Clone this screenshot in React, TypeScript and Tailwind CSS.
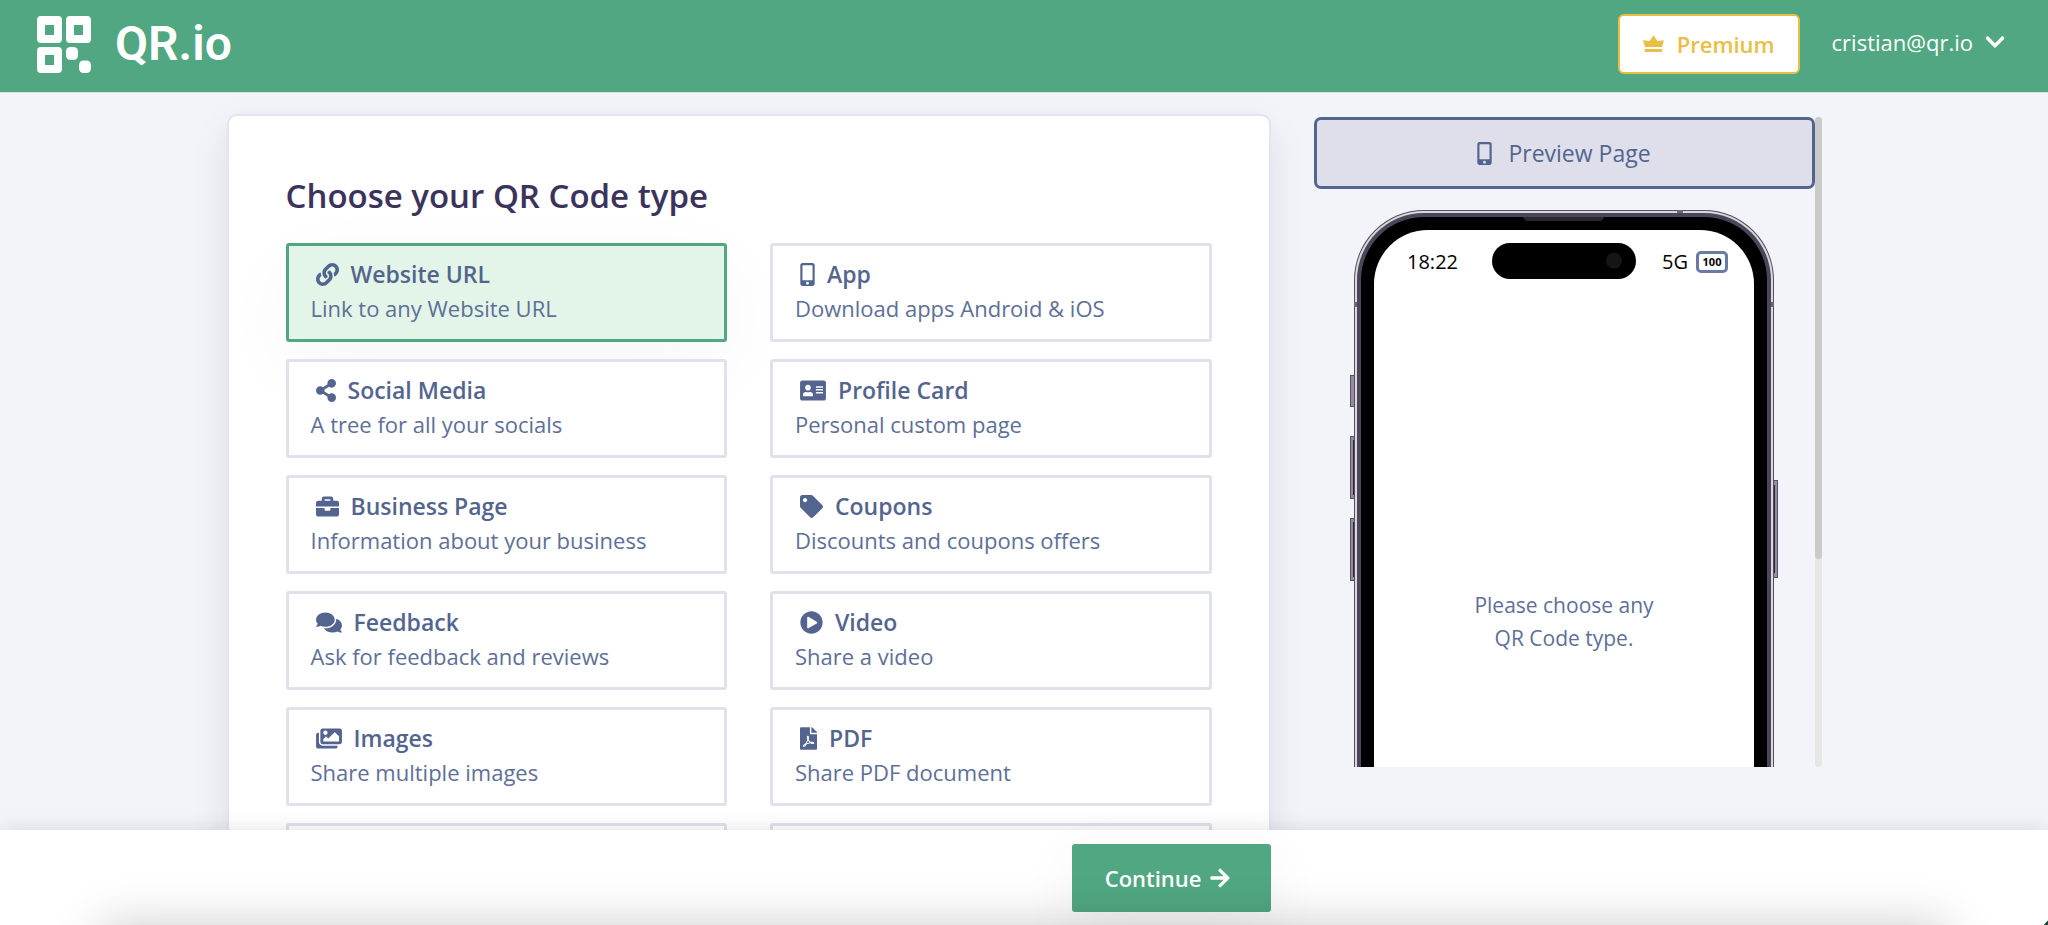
import React, { useState } from "react";
import type { IconType } from "react-icons";
import {
  FaLink, FaShareAlt, FaBriefcase, FaComments, FaImages, FaMobileAlt,
  FaAddressCard, FaTag, FaPlayCircle, FaFilePdf, FaArrowRight, FaChevronDown,
} from "react-icons/fa";

type QrType = { title: string; text: string; Icon: IconType; iconWidth: string };

const types: QrType[] = [
  { title: "Website URL", text: "Link to any Website URL", Icon: FaLink, iconWidth: "w-[23px]" },
  { title: "App", text: "Download apps Android & iOS", Icon: FaMobileAlt, iconWidth: "w-[15px]" },
  { title: "Social Media", text: "A tree for all your socials", Icon: FaShareAlt, iconWidth: "w-5" },
  { title: "Profile Card", text: "Personal custom page", Icon: FaAddressCard, iconWidth: "w-[26px]" },
  { title: "Business Page", text: "Information about your business", Icon: FaBriefcase, iconWidth: "w-[23px]" },
  { title: "Coupons", text: "Discounts and coupons offers", Icon: FaTag, iconWidth: "w-[23px]" },
  { title: "Feedback", text: "Ask for feedback and reviews", Icon: FaComments, iconWidth: "w-[26px]" },
  { title: "Video", text: "Share a video", Icon: FaPlayCircle, iconWidth: "w-[23px]" },
  { title: "Images", text: "Share multiple images", Icon: FaImages, iconWidth: "w-[26px]" },
  { title: "PDF", text: "Share PDF document", Icon: FaFilePdf, iconWidth: "w-[17px]" },
];

function LogoMark() {
  return (
    <svg className="h-[57px] w-[54px]" viewBox="0 0 54 57" fill="#fff" aria-hidden="true">
      <path fillRule="evenodd" d="M4 0h17a4 4 0 0 1 4 4v19a4 4 0 0 1-4 4H4a4 4 0 0 1-4-4V4a4 4 0 0 1 4-4zm4 9v10h9V9z" />
      <path fillRule="evenodd" d="M33 0h17a4 4 0 0 1 4 4v19a4 4 0 0 1-4 4H33a4 4 0 0 1-4-4V4a4 4 0 0 1 4-4zm4 9v10h9V9z" />
      <path fillRule="evenodd" d="M4 31h17a4 4 0 0 1 4 4v18a4 4 0 0 1-4 4H4a4 4 0 0 1-4-4V35a4 4 0 0 1 4-4zm4 8v10h9V39z" />
      <rect x="29" y="31" width="12" height="13" rx="4.5" />
      <rect x="42" y="44.5" width="12" height="12.5" rx="4.5" />
    </svg>
  );
}

function Crown() {
  return (
    <svg className="h-[18px] w-[21px]" viewBox="0 0 21 18" fill="currentColor" aria-hidden="true">
      <path d="M0 5.2 6.6 6 10.5.3 14.4 6l6.6-.8-2 6.8H2z" />
      <rect x="1.8" y="14" width="17.4" height="3" />
    </svg>
  );
}

function PhoneFrame() {
  return (
    <svg className="absolute inset-0 h-full w-full" viewBox="0 0 428 900" preserveAspectRatio="xMidYMin slice" aria-hidden="true">
      <g fill="#978aa0" stroke="#5a5163" strokeWidth="1">
        <rect x=".5" y="165.500" width="5" height="31" />
        <rect x=".5" y="226.500" width="5" height="62" />
        <rect x=".5" y="308.500" width="5" height="62" />
        <rect x="422.500" y="270.500" width="5" height="97" />
      </g>
      <g fill="#2c2435">
        <rect x="3" y="230" width="1.500" height="55" />
        <rect x="3" y="312" width="1.500" height="55" />
        <rect x="423.500" y="275" width="1.500" height="88" />
      </g>
      <rect x="4" y="0" width="420" height="890" rx="70" fill="#55505c" />
      <rect x="5" y="1" width="418" height="888" rx="69" fill="#d9d8dc" />
      <rect x="7" y="3" width="414" height="884" rx="67" fill="#4c465a" />
      <rect x="11" y="7" width="406" height="876" rx="63" fill="#000" />
      <path d="M173 7h81q-1 4-5 4h-71q-4 0-5-4z" fill="#2b282b" />
      <rect x="327" y="0" width="6" height="3" fill="#6f6479" />
      <rect x="4" y="92" width="3" height="5" fill="#6f6479" />
      <rect x="421" y="92" width="3" height="5" fill="#6f6479" />
      <rect x="24" y="20" width="380" height="850" rx="54" fill="#fff" />
      <rect x="142" y="33" width="144" height="36" rx="18" fill="#000" />
      <circle cx="264" cy="50.500" r="8" fill="#151515" />
    </svg>
  );
}

export default function App() {
  const [selected, setSelected] = useState("Website URL");

  return (
    <div className="relative flex h-screen flex-col overflow-hidden bg-[#f3f4f9] font-['Open_Sans',sans-serif] text-[#53658f]">
      <header className="flex items-center justify-between border-b border-[#d3e6e0] bg-[#50a781] pt-[14px] pr-[43px] pb-[18px] pl-[37px]">
        <a href="#" className="flex items-center gap-6 text-white">
          <LogoMark />
          <span className="font-['Roboto',sans-serif] text-[48px] leading-[56px] font-semibold">QR.io</span>
        </a>
        <div className="flex items-center gap-8">
          <button type="button" className="flex h-[60px] items-center gap-[13px] rounded-md border-2 border-[#e9be45] bg-white px-[23px] text-[22px] font-semibold text-[#e9be45]">
            <Crown />
            Premium
          </button>
          <button type="button" className="flex items-center gap-3 pb-1 text-[22px] text-white">
            cristian@qr.io
            <FaChevronDown className="h-[22px] w-5" />
          </button>
        </div>
      </header>

      <main className="min-h-0 flex-1 overflow-hidden px-6">
        <div className="mx-auto flex h-full max-w-[1595px] gap-[43px]">
          <section className="mt-[21px] h-fit flex-1 rounded-[10px] border-2 border-[#e2e4ef] bg-white px-[57px] pt-14 pb-14 shadow-[0_16px_36px_rgba(30,34,70,0.1)]">
            <h1 className="text-[33px] leading-[48px] font-semibold text-[#3b335b]">Choose your QR Code type</h1>
            <div className="mt-[23px] grid grid-cols-2 gap-x-[43px] gap-y-[17px]">
              {types.map(({ title, text, Icon, iconWidth }) => (
                <button
                  key={title}
                  type="button"
                  aria-pressed={selected === title}
                  onClick={() => setSelected(title)}
                  className={
                    selected === title
                      ? "h-[99px] rounded-[3px] border-3 border-[#50a781] bg-[#e3f5e9] px-[22px] pb-[3px] text-left shadow-[0_24px_80px_rgba(0,0,0,0.04)]"
                      : "h-[99px] rounded-[3px] border-3 border-[#dfe1ec] bg-white px-[22px] pb-[3px] text-left"
                  }
                >
                  <span className="flex items-center gap-3 pl-[5px] text-[23px] leading-[34px] font-semibold">
                    <Icon className={`h-[23px] ${iconWidth}`} />
                    {title}
                  </span>
                  <span className="block text-[22px] leading-[34px] text-[#5e6f98]">{text}</span>
                </button>
              ))}
              <div className="h-[99px] rounded-[3px] border-3 border-[#dfe1ec] bg-white" />
              <div className="h-[99px] rounded-[3px] border-3 border-[#dfe1ec] bg-white" />
            </div>
          </section>

          <aside className="mt-6 mb-[63px] flex w-[508px] overflow-hidden">
            <div className="flex min-w-0 flex-1 flex-col items-center">
              <button type="button" className="flex h-[72px] w-full shrink-0 items-center justify-center gap-4 rounded-[7px] border-3 border-[#53658f] bg-[#dedfeb] text-[23px]">
                <FaMobileAlt className="h-[23px] w-[15px]" />
                Preview Page
              </button>
              <div className="relative mt-[21px] h-[900px] w-[428px] shrink-0">
                <PhoneFrame />
                <div className="relative flex items-center justify-between pt-[34px] pr-[50px] pl-[57px] text-black">
                  <span className="text-[20px] leading-[36px]">18:22</span>
                  <span className="flex items-center gap-2 text-[20px] leading-[34px]">
                    5G
                    <span className="flex h-[22px] w-8 items-center justify-center rounded-[5px] border-3 border-[#6a7aa6] bg-white text-[11px] font-bold">100</span>
                  </span>
                </div>
                <p className="relative pt-[309px] text-center text-[21px] leading-[33px] text-[#5e6f98]">
                  Please choose any
                  <br />
                  QR Code type.
                </p>
              </div>
            </div>
            <div className="w-[7px] rounded-full bg-[#e6e6e6]">
              <div className="h-[68%] rounded-full bg-[#cacaca]" />
            </div>
          </aside>
        </div>
      </main>

      <footer className="relative bg-white px-6 pt-[14px] pb-[13px] shadow-[0_0_20px_rgba(0,0,0,0.12)]">
        <div className="mx-auto flex max-w-[1595px] gap-[43px]">
          <div className="flex flex-1 justify-end">
            <button type="button" className="flex h-[68px] items-center gap-2 rounded-[3px] bg-[#50a781] pr-[41px] pl-[33px] text-[22px] font-semibold text-white shadow-[0_16px_60px_rgba(0,0,0,0.06)]">
              Continue
              <FaArrowRight className="h-[22px] w-5" />
            </button>
          </div>
          <div className="w-[508px]" />
        </div>
        <div className="pointer-events-none absolute top-full right-[100px] left-[100px] h-24 shadow-[0_0_50px_rgba(0,0,0,0.2)]" />
        <button type="button" aria-label="Open chat" className="absolute -right-[66px] -bottom-[66px] size-20 rounded-full bg-[#243f3e]" />
      </footer>
    </div>
  );
}
